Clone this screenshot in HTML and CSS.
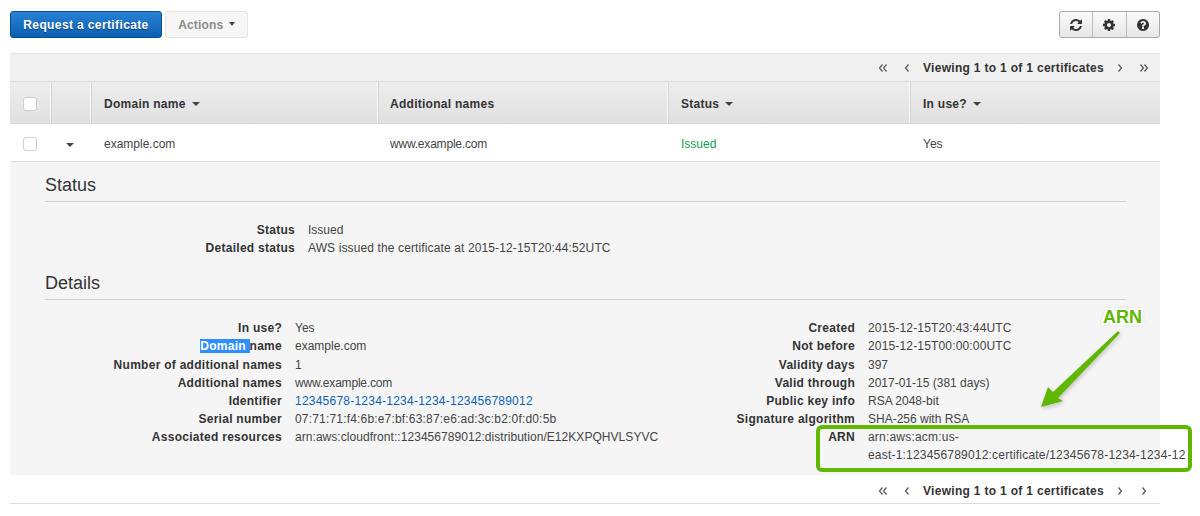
FILE: index.html
```html
<!DOCTYPE html>
<html lang="en">
<head>
<meta charset="utf-8">
<title>Certificates</title>
<link rel="stylesheet" href="styles.css">
</head>
<body>
<div class="page">
  <div class="toolbar">
    <button class="btn primary">Request a certificate</button>
    <button class="btn actions">Actions <span class="caret small"></span></button>
    <div class="tools">
      <span class="tool"><svg viewBox="0 0 1792 1792" width="14" height="14"><path fill="#333" d="M1639 1056q0 5-1 7-64 268-268 434.500t-478 166.500q-146 0-282.500-55t-243.500-157l-129 129q-19 19-45 19t-45-19-19-45v-448q0-26 19-45t45-19h448q26 0 45 19t19 45-19 45l-137 137q71 66 161 102t187 36q134 0 250-65t186-179q11-17 53-117 8-23 30-23h192q13 0 22.500 9.500t9.500 22.500zm25-800v448q0 26-19 45t-45 19h-448q-26 0-45-19t-19-45 19-45l138-138q-148-137-349-137-134 0-250 65t-186 179q-11 17-53 117-8 23-30 23h-199q-13 0-22.500-9.500t-9.500-22.500v-7q65-268 270-434.500t480-166.500q146 0 284 55.500t245 156.500l130-129q19-19 45-19t45 19 19 45z"/></svg></span>
      <span class="tool"><svg viewBox="0 0 1792 1792" width="14" height="14"><path fill="#333" d="M1152 896q0-106-75-181t-181-75-181 75-75 181 75 181 181 75 181-75 75-181zm512-109v222q0 12-8 23t-20 13l-185 28q-19 54-39 91 35 50 107 138 10 12 10 25t-9 23q-27 37-99 108t-94 71q-12 0-26-9l-138-108q-44 23-91 38-16 136-29 186-7 28-36 28h-222q-14 0-24.500-8.500t-11.500-21.500l-28-184q-49-16-90-37l-141 107q-10 9-25 9-14 0-25-11-126-114-165-168-7-10-7-23 0-12 8-23 15-21 51-66.500t54-70.500q-27-50-41-99l-183-27q-13-2-21-12.500t-8-23.500v-222q0-12 8-23t19-13l186-28q14-46 39-92-40-57-107-138-10-12-10-24 0-10 9-23 26-36 98.500-107.500t94.500-71.500q13 0 26 10l138 107q44-23 91-38 16-136 29-186 7-28 36-28h222q14 0 24.500 8.500t11.500 21.500l28 184q49 16 90 37l142-107q9-9 24-9 13 0 25 10 129 119 165 170 7 8 7 22 0 12-8 23-15 21-51 66.500t-54 70.500q26 50 41 98l183 28q13 2 21 12.500t8 23.500z"/></svg></span>
      <span class="tool"><svg viewBox="0 0 1792 1792" width="14" height="14"><path fill="#333" d="M1024 1376v-192q0-14-9-23t-23-9h-192q-14 0-23 9t-9 23v192q0 14 9 23t23 9h192q14 0 23-9t9-23zm256-672q0-88-55.500-163t-138.500-116-170-41q-243 0-371 213-15 24 8 42l132 100q7 6 19 6 16 0 25-12 53-68 86-92 34-24 86-24 48 0 85.500 26t37.500 59q0 38-20 61t-68 45q-63 28-115.500 86.500t-52.500 125.500v36q0 14 9 23t23 9h192q14 0 23-9t9-23q0-19 21.500-49.500t54.500-49.500q32-18 49-28.500t46-35 44.500-48 28-60.500 12.500-81zm384 192q0 209-103 385.500t-279.500 279.500-385.500 103-385.500-103-279.500-279.500-103-385.500 103-385.500 279.500-279.500 385.500-103 385.500 103 279.500 279.500 103 385.500z"/></svg></span>
    </div>
  </div>

  <div class="pager top">
    <svg class="chev" viewBox="0 0 10 10" width="10" height="10"><path d="M4.500 1.500 1.500 5l3 3.500M8.500 1.500 5.500 5l3 3.500"/></svg>
    <svg class="chev prev" viewBox="0 0 6 10" width="6" height="10"><path d="M4.500 1.500 1.500 5l3 3.500"/></svg>
    <span class="pg-text">Viewing 1 to 1 of 1 certificates</span>
    <svg class="chev next" viewBox="0 0 6 10" width="6" height="10"><path d="m1.500 1.500 3 3.500-3 3.500"/></svg>
    <svg class="chev last" viewBox="0 0 10 10" width="10" height="10"><path d="M1.500 1.500 4.500 5l-3 3.500M5.500 1.500 8.500 5l-3 3.500"/></svg>
  </div>

  <div class="cols head">
    <div class="cell"><span class="check"></span></div>
    <div class="cell"></div>
    <div class="cell th">Domain name <span class="caret"></span></div>
    <div class="cell th">Additional names</div>
    <div class="cell th">Status <span class="caret"></span></div>
    <div class="cell th">In use? <span class="caret"></span></div>
  </div>

  <div class="cols row">
    <div class="cell"><span class="check grey"></span></div>
    <div class="cell"><span class="caret down"></span></div>
    <div class="cell td">example.com</div>
    <div class="cell td www">www.example.com</div>
    <div class="cell td ok">Issued</div>
    <div class="cell td">Yes</div>
  </div>

  <div class="detail">
    <h2 class="sec-title first">Status</h2>
    <dl class="kv status-kv">
      <dt>Status</dt><dd>Issued</dd>
      <dt>Detailed status</dt><dd class="num">AWS issued the certificate at 2015-12-15T20:44:52UTC</dd>
    </dl>
    <h2 class="sec-title second">Details</h2>
    <div class="detail-cols">
      <dl class="kv left-kv">
        <dt>In use?</dt><dd>Yes</dd>
        <dt><span class="sel">Domain </span>name</dt><dd>example.com</dd>
        <dt>Number of additional names</dt><dd>1</dd>
        <dt>Additional names</dt><dd class="www">www.example.com</dd>
        <dt>Identifier</dt><dd><a class="link" href="#">12345678-1234-1234-1234-123456789012</a></dd>
        <dt>Serial number</dt><dd class="serial">07:71:71:f4:6b:e7:bf:63:87:e6:ad:3c:b2:0f:d0:5b</dd>
        <dt>Associated resources</dt><dd class="wide">arn:aws:cloudfront::123456789012:distribution/E12KXPQHVLSYVC</dd>
      </dl>
      <dl class="kv right-kv">
        <dt>Created</dt><dd class="date">2015-12-15T20:43:44UTC</dd>
        <dt>Not before</dt><dd class="date">2015-12-15T00:00:00UTC</dd>
        <dt>Validity days</dt><dd>397</dd>
        <dt>Valid through</dt><dd>2017-01-15 (381 days)</dd>
        <dt>Public key info</dt><dd>RSA 2048-bit</dd>
        <dt>Signature algorithm</dt><dd>SHA-256 with RSA</dd>
        <dt>ARN</dt><dd class="arn">arn:aws:acm:us-<br>east-1:123456789012:certificate/12345678-1234-1234-12</dd>
      </dl>
    </div>
  </div>

  <div class="pager bottom">
    <svg class="chev" viewBox="0 0 10 10" width="10" height="10"><path d="M4.500 1.500 1.500 5l3 3.500M8.500 1.500 5.500 5l3 3.500"/></svg>
    <svg class="chev prev" viewBox="0 0 6 10" width="6" height="10"><path d="M4.500 1.500 1.500 5l3 3.500"/></svg>
    <span class="pg-text">Viewing 1 to 1 of 1 certificates</span>
    <svg class="chev next" viewBox="0 0 6 10" width="6" height="10"><path d="m1.500 1.500 3 3.500-3 3.500"/></svg>
    <svg class="chev last single" viewBox="0 0 6 10" width="6" height="10"><path d="m1.500 1.500 3 3.500-3 3.500"/></svg>
  </div>

  <div class="arn-box"></div>
  <svg class="arn-arrow" viewBox="0 0 100 100" width="100" height="100"><path fill="#5fb700" d="M80 3 78 1 13 62 8 57 1 77l22-6-5-3z"/></svg>
  <span class="arn-tag">ARN</span>
</div>
</body>
</html>
```
FILE: styles.css
```css
* { box-sizing: border-box; }
html, body { margin: 0; padding: 0; background: #fff; }
body { font-family: "Liberation Sans", Arial, sans-serif; font-size: 12px; color: #444; }
.page { position: relative; width: 1200px; height: 516px; padding: 11px 40px 0 10px; overflow: hidden; }

.toolbar { display: flex; align-items: flex-start; height: 27px; }
.btn { height: 27px; border-radius: 3px; font: bold 12px "Liberation Sans", Arial, sans-serif; letter-spacing: .38px; padding: 0; }
.primary { width: 152px; color: #fff; background: linear-gradient(#2a82d4, #0a5fb0); border: 1px solid #0a4f96; text-shadow: 0 1px 0 #0a4480; }
.actions { width: 83px; margin-left: 3px; color: #8a8a8a; background: #f6f6f6; border: 1px solid #e6e6e6; letter-spacing: .15px; }
.tools { margin-left: auto; display: flex; width: 101px; height: 27px; border: 1px solid #aaa; border-radius: 3px; background: linear-gradient(#fbfbfb, #e6e6e6); }
.tool { flex: 1; display: flex; align-items: center; justify-content: center; border-left: 1px solid #bbb; }
.tool:first-child { border-left: 0; }

.caret { display: inline-block; width: 0; height: 0; margin-left: 4px; vertical-align: middle; border-left: 4px solid transparent; border-right: 4px solid transparent; border-top: 4px solid #444; }
.caret.small { border-left-width: 3.5px; border-right-width: 3.5px; margin-left: 2px; margin-top: -2px; }
.caret.down { margin: 2px 0 0; }

.pager { display: flex; align-items: center; justify-content: flex-end; height: 28px; font-weight: bold; color: #333; letter-spacing: .31px; padding-right: 11px; }
.pager.top { margin-top: 15px; background: #f0f0f0; border-top: 1px solid #e4e4e4; }
.pager.bottom { height: 29px; padding-top: 3px; border-bottom: 1px solid #ddd; }
.chev { fill: none; stroke: #555; stroke-width: 1.2; flex: none; }
.chev.prev { margin: 0 13px 0 16px; }
.chev.next { margin: 0 0 0 13px; }
.chev.last { margin-left: 16px; }
.chev.last.single { margin-left: 18px; margin-right: 2px; }

.cols { display: grid; grid-template-columns: 40px 40px 287px 290px 242px 251px; }
.cell { display: flex; align-items: center; padding: 2px 0 0 14px; }
.cell:nth-child(-n+2) { justify-content: center; padding-left: 0; }
.cell:nth-child(4) { padding-left: 13px; }
.head { height: 43px; background: linear-gradient(#eeeeee, #e0e0e0); border-top: 1px solid #dcdcdc; border-bottom: 1px solid #d8d8d8; }
.head .cell + .cell { box-shadow: inset 1px 0 0 #fafafa, inset 2px 0 0 #d4d4d4; }
.th { font-weight: bold; color: #333; letter-spacing: .27px; gap: 6px; }
.th .caret { margin-left: 0; }
.row { height: 38px; border-bottom: 1px solid #ddd; }
.td { color: #444; }
.ok { color: #14a050; }
.check { width: 14px; height: 14px; background: #fff; border: 1px solid #cfcfcf; border-radius: 3px; }
.check.grey { border-color: #d0d0d0; }

.detail { height: 313px; background: #f5f5f5; padding: 0 34px 0 35px; }
.sec-title { margin: 0; height: 40px; padding-top: 13px; font: normal 18px/20px "Liberation Sans", Arial, sans-serif; color: #333; border-bottom: 1px solid #cfcfcf; }
.sec-title.second { margin-top: 6px; height: 37px; padding-top: 10px; }
.kv { display: grid; margin: 0; line-height: 18.15px; }
.kv dt { font-weight: bold; color: #333; text-align: right; letter-spacing: .27px; white-space: nowrap; }
.kv dd { margin: 0; white-space: nowrap; }
.kv .num { letter-spacing: .12px; }
.kv .date { letter-spacing: .16px; }
.kv .serial { letter-spacing: .18px; }
.kv .wide { letter-spacing: .05px; }
.kv .arn { letter-spacing: .2px; }
.www { letter-spacing: -.2px; }
.status-kv { grid-template-columns: 250px 1fr; column-gap: 13px; margin-top: 19px; }
.detail-cols { display: flex; align-items: flex-start; margin-top: 19px; }
.left-kv { grid-template-columns: 237px auto; column-gap: 13px; width: 573px; }
.right-kv { grid-template-columns: 237px auto; column-gap: 13px; align-content: start; }
.sel { background: #2f8fff; color: #fff; }
.link { color: #0b63b7; text-decoration: none; letter-spacing: .23px; }

.arn-box { position: absolute; left: 816px; top: 425px; width: 376px; height: 47px; border: 4px solid #5fb700; border-radius: 6px; }
.arn-arrow { position: absolute; left: 1040px; top: 330px; filter: drop-shadow(1px 2px 2px rgba(0,0,0,.2)); }
.arn-tag { position: absolute; left: 1103px; top: 307px; font: bold 18px/20px "Liberation Sans", Arial, sans-serif; color: #5fb700; text-shadow: -2px -2px 0 #fff, 2px -2px 0 #fff, -2px 2px 0 #fff, 2px 2px 0 #fff, 0 -2px 0 #fff, 0 2px 0 #fff, -2px 0 0 #fff, 2px 0 0 #fff, 0 0 4px #888; }
```
